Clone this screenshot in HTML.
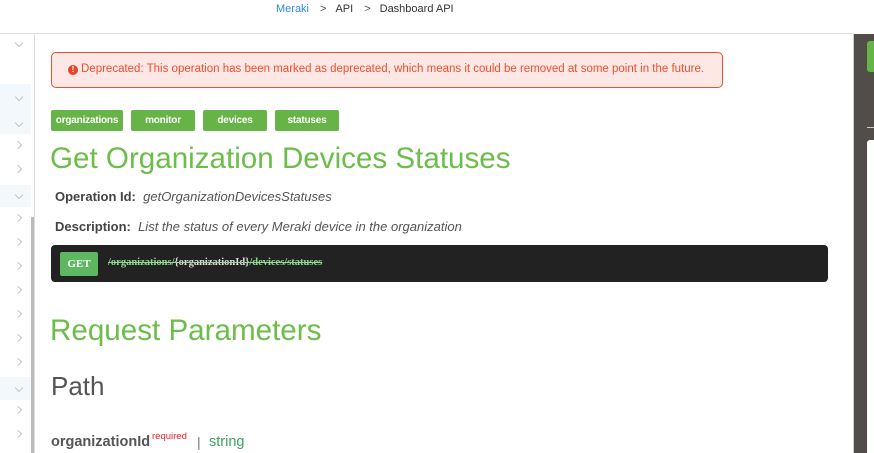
<!DOCTYPE html>
<html><head><style>
*{margin:0;padding:0;box-sizing:border-box}
body{width:874px;height:453px;overflow:hidden;background:#fff;font-family:"Liberation Sans",sans-serif;position:relative}
.abs{position:absolute}
.chev{position:absolute;left:16px;width:6px;height:6px;border-right:1px solid #c4c4c4;border-bottom:1px solid #c4c4c4}
.r{transform:rotate(-45deg)}
.d{transform:rotate(45deg)}
.tag{position:absolute;top:110px;height:21px;background:#66b447;color:#fff;font-size:10px;line-height:21px;text-align:center;border-radius:2px;font-weight:bold;letter-spacing:-0.2px}
</style></head><body>
<div class="abs" style="left:276px;top:3px;font-size:11px;color:#333;white-space:nowrap"><span style="color:#2e8ad8">Meraki</span><span style="margin:0 9px 0 11px;color:#555">&gt;</span>API<span style="margin:0 9px 0 11px;color:#555">&gt;</span>Dashboard API</div>
<div class="abs" style="left:0;top:33px;width:854px;height:1px;background:#ddd"></div>
<div class="abs" style="left:34px;top:34px;width:1px;height:419px;background:#ddd"></div>
<div class="abs" style="left:31px;top:217px;width:3px;height:236px;background:#bbb"></div>
<div class="abs" style="left:0;top:84px;width:31px;height:50px;background:#f2f8fc"></div>
<div class="abs" style="left:0;top:185px;width:31px;height:22px;background:#f2f8fc"></div>
<div class="abs" style="left:0;top:377px;width:31px;height:23px;background:#f2f8fc"></div>
<div class="chev d" style="top:40px"></div>
<div class="chev d" style="top:94px"></div>
<div class="chev d" style="top:120px"></div>
<div class="chev r" style="top:142px;left:15px"></div>
<div class="chev r" style="top:166px;left:15px"></div>
<div class="chev d" style="top:192px"></div>
<div class="chev r" style="top:215px;left:15px"></div>
<div class="chev r" style="top:239px;left:15px"></div>
<div class="chev r" style="top:263px;left:15px"></div>
<div class="chev r" style="top:287px;left:15px"></div>
<div class="chev r" style="top:311px;left:15px"></div>
<div class="chev r" style="top:335px;left:15px"></div>
<div class="chev r" style="top:359px;left:15px"></div>
<div class="chev d" style="top:385px"></div>
<div class="chev r" style="top:407px;left:15px"></div>
<div class="chev r" style="top:431px;left:15px"></div>

<div class="abs" style="left:51px;top:52px;width:672px;height:36px;border:1px solid #f04d2e;border-radius:5px;background:#fde8e6"></div>
<div class="abs" style="left:68px;top:65px;width:10px;height:10px;border-radius:50%;background:#e8432a;color:#fff;font-size:8px;line-height:10px;text-align:center;font-weight:bold">!</div>
<div class="abs" style="left:81px;top:63px;font-size:11.5px;color:#f04d2e;white-space:nowrap">Deprecated: This operation has been marked as deprecated, which means it could be removed at some point in the future.</div>

<div class="tag" style="left:51px;width:72px">organizations</div>
<div class="tag" style="left:131px;width:64px">monitor</div>
<div class="tag" style="left:203px;width:64px">devices</div>
<div class="tag" style="left:275px;width:64px">statuses</div>

<div class="abs" style="left:50px;top:142px;font-size:29.6px;color:#6cbd4a;white-space:nowrap">Get Organization Devices Statuses</div>
<div class="abs" style="left:55px;top:189px;font-size:13px;color:#555;white-space:nowrap"><b style="color:#444">Operation Id:</b>&nbsp; <i>getOrganizationDevicesStatuses</i></div>
<div class="abs" style="left:55px;top:219px;font-size:13px;color:#555;white-space:nowrap"><b style="color:#444">Description:</b>&nbsp; <i>List the status of every Meraki device in the organization</i></div>

<div class="abs" style="left:51px;top:245px;width:777px;height:37px;background:#222;border-radius:4px"></div>
<div class="abs" style="left:60px;top:252px;width:38px;height:24px;background:#5db860;border-radius:2px;color:#fff;font-family:'Liberation Serif',serif;font-weight:bold;font-size:11px;line-height:24px;text-align:center">GET</div>
<div class="abs" style="left:108px;top:257px;font-family:'Liberation Serif',serif;font-weight:bold;font-size:10.5px;white-space:nowrap;color:#8fd88f;text-decoration:line-through">/organizations/<span style="color:#ddd">{organizationId}</span>/devices/statuses</div>

<div class="abs" style="left:50px;top:314px;font-size:29.6px;color:#6cbd4a;white-space:nowrap">Request Parameters</div>
<div class="abs" style="left:51px;top:371px;font-size:26px;color:#555">Path</div>
<div class="abs" style="left:51px;top:434px;font-size:14.5px;color:#555;white-space:nowrap"><b>organizationId</b></div>
<div class="abs" style="left:152px;top:431px;font-size:9.5px;color:#e8222a">required</div>
<div class="abs" style="left:197px;top:434px;font-size:14px;color:#777">|</div>
<div class="abs" style="left:209px;top:434px;font-size:14.5px;color:#3ca35d">string</div>

<div class="abs" style="left:853px;top:34px;width:1px;height:419px;background:#ccc"></div>
<div class="abs" style="left:854px;top:34px;width:20px;height:419px;background:#524d49"></div>
<div class="abs" style="left:867px;top:41px;width:7px;height:31px;background:#66b447;border-radius:3px 0 0 3px"></div>
<div class="abs" style="left:867px;top:127px;width:7px;height:1px;background:#ccc"></div>
<div class="abs" style="left:867px;top:140px;width:7px;height:313px;background:#fff;border-radius:3px 0 0 0"></div>
</body></html>
